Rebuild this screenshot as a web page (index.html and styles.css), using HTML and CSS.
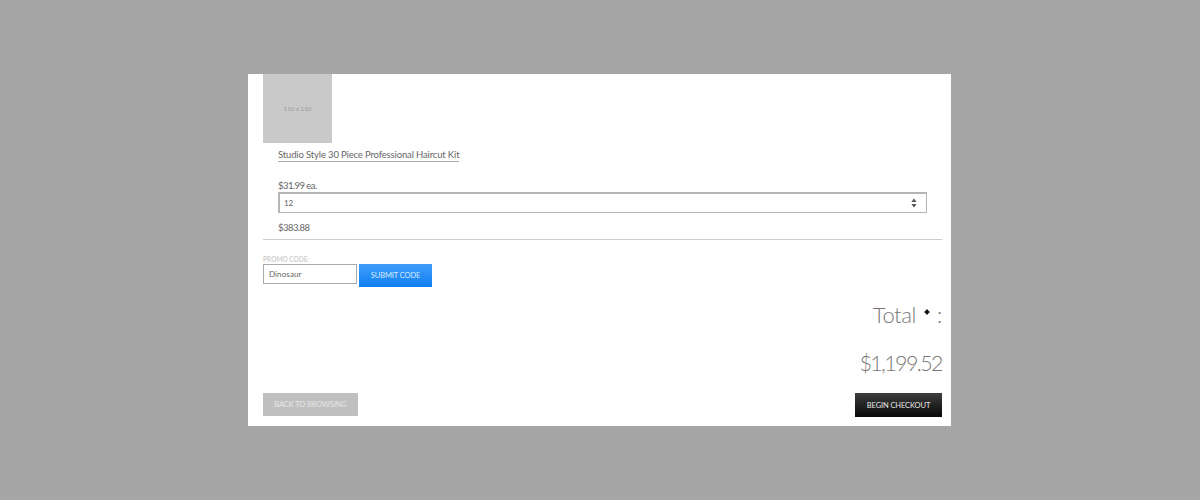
FILE: index.html
```html
<!DOCTYPE html>
<html lang="en">
<head>
<meta charset="utf-8">
<title>Cart</title>
<link rel="stylesheet" href="styles.css">
</head>
<body>
<main class="modal">
  <section class="item">
    <div class="thumb">110 x 110</div>
    <div class="item-body">
      <a class="item-name" href="#">Studio Style 30 Piece Professional Haircut Kit</a>
      <div class="each">$31.99 ea.</div>
      <div class="qty"><span>12</span>
        <svg class="updown" width="6" height="10" viewBox="0 0 6 10"><path d="M3 0.5L5.6 4H0.4Z M3 9.5L0.4 6H5.6Z" fill="#555"/></svg>
      </div>
      <div class="line-total">$383.88</div>
    </div>
  </section>
  <section class="promo">
    <label class="promo-label">PROMO CODE:</label>
    <div class="promo-row">
      <div class="promo-input">Dinosaur</div>
      <button class="btn btn-blue">SUBMIT CODE</button>
    </div>
  </section>
  <section class="totals">
    <div class="total-label">Total <svg class="mark" width="6" height="6" viewBox="0 0 8 8"><path d="M4 0L6 2.4L8 4L6 5.6L4 8L2 5.6L0 4L2 2.4Z" fill="#111"/></svg> :</div>
    <div class="total-value">$1,199.52</div>
  </section>
  <section class="actions">
    <button class="btn btn-grey">BACK TO BROWSING</button>
    <button class="btn btn-black">BEGIN CHECKOUT</button>
  </section>
</main>
</body>
</html>
```
FILE: styles.css
```css
* { box-sizing: border-box; }
html, body { margin: 0; height: 100%; }
body {
  background: #a6a6a6;
  display: flex;
  justify-content: flex-start;
  align-items: flex-start;
  padding: 74px 0 0 248px;
  font-family: Lato, "Liberation Sans", sans-serif;
  color: #666;
}
.modal {
  width: 703px;
  height: 352px;
  background: #fff;
  padding: 0 9px 0 15px;
  display: flex;
  flex-direction: column;
}
.item { border-bottom: 1px solid #ccc; height: 166px; }
.thumb {
  width: 69px;
  height: 69px;
  background: #c9c9c9;
  color: #999;
  font-size: 6.2px;
  display: flex;
  align-items: center;
  justify-content: center;
}
.item-body { padding: 0 15px; }
.item-name {
  display: block;
  width: fit-content;
  margin-top: 5px;
  font-size: 9.5px;
  letter-spacing: -0.15px;
  line-height: 13px;
  color: #666;
  text-decoration: none;
  border-bottom: 1px solid #aaa;
}
.each { margin-top: 17px; font-size: 9.5px; letter-spacing: -0.55px; line-height: 13px; }
.qty {
  height: 21px;
  margin-top: 0;
  border: 2px solid #b4b4b4;
  border-right-width: 1px;
  border-bottom-width: 1px;
  padding: 0 9px 0 4px;
  display: flex;
  align-items: center;
  justify-content: space-between;
  font-size: 8px;
  letter-spacing: -0.2px;
}
.line-total { margin-top: 8px; font-size: 9.5px; letter-spacing: -0.55px; line-height: 13px; }
.promo { margin-top: 15px; }
.promo-label { display: block; font-size: 6.5px; line-height: 9px; font-weight: 700; color: #cfcfcf; }
.promo-row { display: flex; gap: 2px; align-items: flex-start; }
.promo-input {
  width: 94px;
  height: 20px;
  border: 1px solid #aaa;
  padding-left: 5px;
  font-size: 8px;
  line-height: 18px;
  letter-spacing: 0.1px;
}
.btn {
  border: 0;
  padding: 0;
  font-family: Lato, "Liberation Sans", sans-serif;
  font-size: 7.5px;
  letter-spacing: -0.1px;
  color: #fff;
  text-align: center;
}
.btn-blue {
  width: 73px;
  height: 23px;
  background: linear-gradient(#3f9dfb, #0f7ff0);
  color: #d8ecff;
}
.totals { text-align: right; font-weight: 300; color: #777; }
.total-label { margin-top: 14px; font-size: 22px; letter-spacing: -0.4px; line-height: 28px; }
.mark { vertical-align: 8px; margin: 0 2px; }
.total-value { margin-top: 20px; font-size: 21.5px; letter-spacing: -1.6px; line-height: 28px; }
.actions {
  margin-top: 16px;
  display: flex;
  justify-content: space-between;
  align-items: flex-start;
}
.btn-grey { width: 95px; height: 23px; background: #c0c0c0; color: #e6e6e6; }
.btn-black { width: 87px; height: 24px; background: linear-gradient(#3d3d3d, #080808); color: #e8e8e8; }
```
